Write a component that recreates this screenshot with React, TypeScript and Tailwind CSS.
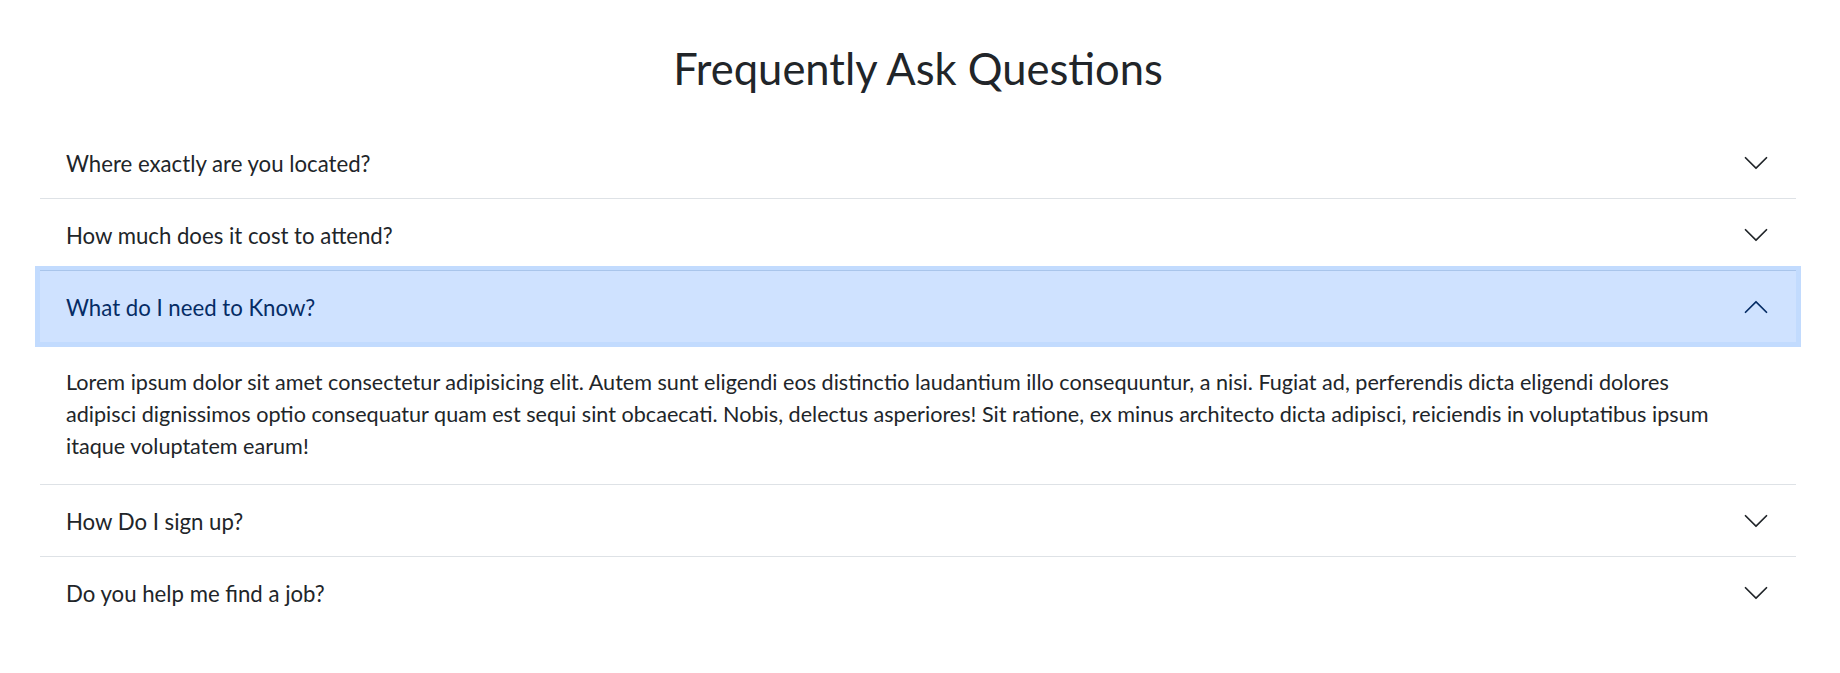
import React from "react";

const font = { fontFamily: "Lato, 'Noto Sans', sans-serif" };

function Chevron({ up }: { up?: boolean }) {
  return (
    <svg
      viewBox="0 0 16 16"
      className={up ? "h-[28px] w-[28px] shrink-0 rotate-180" : "h-[28px] w-[28px] shrink-0"}
      fill={up ? "#052c65" : "#212529"}
    >
      <path
        fillRule="evenodd"
        d="M1.646 4.646a.5.5 0 0 1 .708 0L8 10.293l5.646-5.647a.5.5 0 0 1 .708.708l-6 6a.5.5 0 0 1-.708 0l-6-6a.5.5 0 0 1 0-.708z"
      />
    </svg>
  );
}

function Row({ q, last }: { q: string; last?: boolean }) {
  return (
    <div className={last ? "" : "border-b border-[#dee2e6]"}>
      <button className="flex h-[71px] w-full items-center justify-between px-[26px] text-left text-[22.2px] text-[#212529]">
        <span className="pt-[3px] leading-[30px]">{q}</span>
        <Chevron />
      </button>
    </div>
  );
}

export default function App() {
  return (
    <div className="min-h-[673px] w-full bg-white text-[#212529]" style={font}>
      <div className="pl-[40px] pr-[44px]">
        <h1 className="pt-[42px] pb-[33px] text-center text-[43.5px] font-normal leading-[52px] text-[#212529]">
          Frequently Ask Questions
        </h1>
        <div>
          <Row q="Where exactly are you located?" />
          <Row q="How much does it cost to attend?" />
          <div className="border-b border-[#dee2e6]">
            <button className="relative z-10 flex h-[71px] w-full items-center justify-between bg-[#cfe2ff] px-[26px] text-left text-[22.2px] text-[#052c65] shadow-[0_0_0_5px_rgba(13,110,253,0.25)]">
              <span className="pt-[3px] leading-[30px]">What do I need to Know?</span>
              <Chevron up />
            </button>
            <div className="px-[26px] pt-[24px] pb-[22px] text-[21.6px] leading-[32px] text-[#212529]">
              <span className="whitespace-nowrap">
                Lorem ipsum dolor sit amet consectetur adipisicing elit. Autem sunt eligendi eos distinctio laudantium illo consequuntur, a nisi. Fugiat ad, perferendis dicta eligendi dolores
              </span>
              <br />
              <span className="whitespace-nowrap">
                adipisci dignissimos optio consequatur quam est sequi sint obcaecati. Nobis, delectus asperiores! Sit ratione, ex minus architecto dicta adipisci, reiciendis in voluptatibus ipsum
              </span>
              <br />
              <span className="whitespace-nowrap">itaque voluptatem earum!</span>
            </div>
          </div>
          <Row q="How Do I sign up?" />
          <Row q="Do you help me find a job?" last />
        </div>
      </div>
    </div>
  );
}
